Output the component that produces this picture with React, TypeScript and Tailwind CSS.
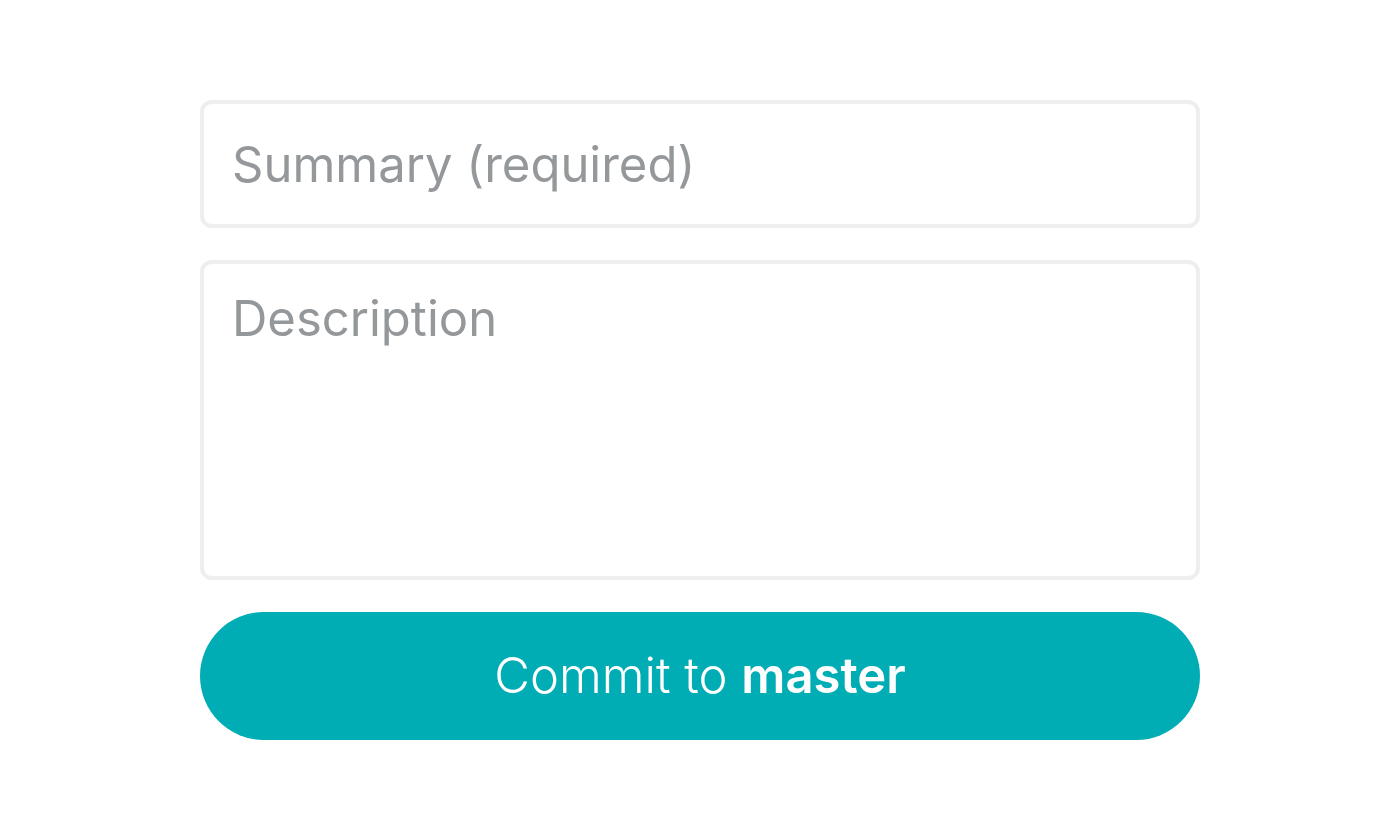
export default function App() {
    return (
        <div className="w-[1400px] h-[840px] bg-white flex justify-center pt-[100px] font-['Inter','Noto_Sans',sans-serif]">
            <div className="w-[1000px] flex flex-col gap-8">
                <input
                    type="text"
                    placeholder="Summary (required)"
                    className="h-[128px] w-full border-4 border-[#eeeeee] rounded-xl px-7 text-[49px] text-[#333] placeholder:text-[#95989b] outline-none bg-white"
                />
                <textarea
                    placeholder="Description"
                    className="h-[320px] w-full border-4 border-[#eeeeee] rounded-xl px-7 pt-[19px] text-[49px] leading-[72px] text-[#333] placeholder:text-[#95989b] outline-none resize-none bg-white"
                />
                <button className="h-[128px] w-full rounded-full bg-[#00adb5] text-white text-[49px] font-light">
                    Commit to <span className="font-semibold">master</span>
                </button>
            </div>
        </div>
    );
}
